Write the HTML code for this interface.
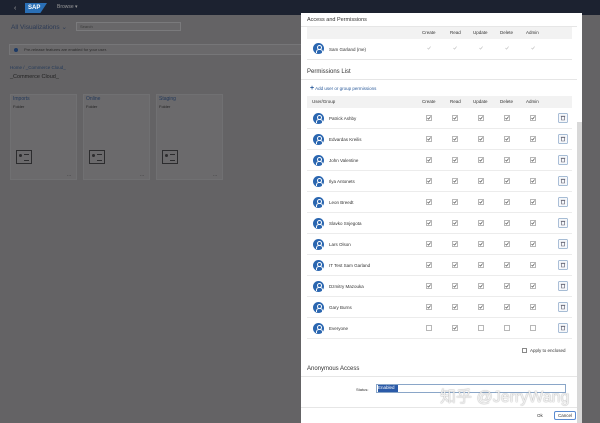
<!DOCTYPE html>
<html><head><meta charset="utf-8"><style>
*{box-sizing:border-box;margin:0;padding:0}
body{width:600px;height:423px;overflow:hidden;background:#646365;font-family:"Liberation Sans",sans-serif;position:relative}
.a{position:absolute}
.bar{left:0;top:0;width:600px;height:15px;background:#1c2230}
.t{font-size:5px;color:#333;white-space:nowrap}
.card{background:#6b6a6c;border:1px solid #707072;width:67px;height:86px}
.dlg{left:301px;top:13px;width:281px;height:410px;background:#fff}
.cb{width:5px;height:5px;border:1px solid #888;font-size:4px;line-height:3px;text-align:center;color:#333}
.av{width:11px;height:11px;border-radius:50%;background:#2a66b0}
.av:before{content:"";position:absolute;left:4px;top:2px;width:3px;height:3px;border-radius:50%;border:1px solid #fff}
.av:after{content:"";position:absolute;left:3px;top:5.5px;width:5px;height:3px;border:1px solid #fff;border-radius:3px 3px 0 0;border-bottom:none}
.line{height:1px;background:#e6e6e6}
.fi{width:16px;height:14px;border:1.5px solid #2c2c2e}
.fi:before{content:"";position:absolute;left:2px;top:3px;width:3px;height:3px;background:#2c2c2e;border-radius:50%}
.fi:after{content:"";position:absolute;left:7px;top:2.5px;width:5px;height:5px;border-top:1px solid #2c2c2e;border-bottom:1px solid #2c2c2e}
</style></head><body>
<div class="a bar"></div>
<div class="a" style="left:14px;top:5px;font-size:7px;color:#aaa">‹</div>
<div class="a" style="left:25px;top:3px;width:22px;height:10px;background:#2a6fb5;clip-path:polygon(0 0,100% 0,70% 100%,0 100%);color:#fff;font-size:6px;font-weight:bold;padding-left:3px;line-height:10px">SAP</div>
<div class="a t" style="left:57px;top:4px;color:#999;font-size:5px">Browse ▾</div>
<div class="a t" style="left:11px;top:23px;color:#2b3a55;font-size:6.5px">All Visualizations ⌄</div>
<div class="a" style="left:76px;top:22px;width:105px;height:9px;border:1px solid #7a7a7c;background:#686769"></div>
<div class="a t" style="left:80px;top:24px;color:#3a3a3a;font-size:4px">Search</div>
<div class="a" style="left:9px;top:44px;width:295px;height:11px;background:#6a696b;border:1px solid #767678"></div>
<div class="a" style="left:14px;top:48px;width:4px;height:4px;border-radius:50%;background:#1d3a66"></div>
<div class="a t" style="left:24px;top:47px;font-size:4px;color:#2a2a2a">Pre-release features are enabled for your user.</div>
<div class="a t" style="left:10px;top:65px;font-size:4.5px;color:#243a5a">Home / _Commerce Cloud_</div>
<div class="a t" style="left:10px;top:74px;font-size:5.5px;color:#222">_Commerce Cloud_</div>
<div class="a card" style="left:10px;top:94px"></div>
<div class="a card" style="left:83px;top:94px"></div>
<div class="a card" style="left:156px;top:94px"></div>
<div class="a t" style="left:13px;top:96px;color:#22385a">Imports</div><div class="a t" style="left:13px;top:104px;font-size:4px;color:#222">Folder</div>
<div class="a t" style="left:86px;top:96px;color:#22385a">Online</div><div class="a t" style="left:86px;top:104px;font-size:4px;color:#222">Folder</div>
<div class="a t" style="left:159px;top:96px;color:#22385a">Staging</div><div class="a t" style="left:159px;top:104px;font-size:4px;color:#222">Folder</div>
<div class="a fi" style="left:16px;top:150px"></div>
<div class="a fi" style="left:89px;top:150px"></div>
<div class="a fi" style="left:162px;top:150px"></div>
<div class="a t" style="left:67px;top:172px;font-size:5px;color:#333">...</div>
<div class="a t" style="left:140px;top:172px;font-size:5px;color:#333">...</div>
<div class="a t" style="left:213px;top:172px;font-size:5px;color:#333">...</div>

<div class="a dlg"></div>
<div class="a" style="left:577px;top:122px;width:5px;height:301px;background:#d8d8d8"></div>
<div class="a t" style="left:307px;top:17px;font-size:5.5px">Access and Permissions</div>
<div class="a line" style="left:301px;top:26px;width:276px"></div>
<div class="a" style="left:307px;top:27px;width:265px;height:12px;background:#f2f2f2"></div>
<div class="a t" style="left:307px;top:30px;font-size:4.5px"><span class="a" style="left:115px">Create</span><span class="a" style="left:143px">Read</span><span class="a" style="left:166px">Update</span><span class="a" style="left:193px">Delete</span><span class="a" style="left:219px">Admin</span></div>
<div class="a av" style="left:313px;top:43px"></div>
<div class="a t" style="left:329px;top:47px;font-size:4.5px">Sam Garland (me)</div>
<div class="a line" style="left:307px;top:59px;width:265px"></div>
<div class="a t" style="left:307px;top:69px;font-size:6px">Permissions List</div>
<div class="a line" style="left:301px;top:79px;width:276px"></div>
<div class="a t" style="left:310px;top:85px;font-size:4.5px;color:#2a5a9a"><b style="font-size:7px">+</b> Add user or group permissions</div>
<div class="a" style="left:307px;top:96px;width:265px;height:12px;background:#f2f2f2"></div>
<div class="a t" style="left:312px;top:99px;font-size:4.5px">User/Group</div>
<div class="a t" style="left:307px;top:99px;font-size:4.5px"><span class="a" style="left:115px">Create</span><span class="a" style="left:143px">Read</span><span class="a" style="left:166px">Update</span><span class="a" style="left:193px">Delete</span><span class="a" style="left:219px">Admin</span></div>

<div class="a" style="left:307px;top:108px">
<div class="a" style="top:0"><div class="a av" style="left:6px;top:5px"></div><div class="a t" style="left:22px;top:8px;font-size:4.5px">Patrick Ashby</div></div>
<div class="a" style="top:21px"><div class="a av" style="left:6px;top:5px"></div><div class="a t" style="left:22px;top:8px;font-size:4.5px">Edvardas Kreilis</div></div>
<div class="a" style="top:42px"><div class="a av" style="left:6px;top:5px"></div><div class="a t" style="left:22px;top:8px;font-size:4.5px">John Valentine</div></div>
<div class="a" style="top:63px"><div class="a av" style="left:6px;top:5px"></div><div class="a t" style="left:22px;top:8px;font-size:4.5px">Ilya Antonets</div></div>
<div class="a" style="top:84px"><div class="a av" style="left:6px;top:5px"></div><div class="a t" style="left:22px;top:8px;font-size:4.5px">Leon Breedt</div></div>
<div class="a" style="top:105px"><div class="a av" style="left:6px;top:5px"></div><div class="a t" style="left:22px;top:8px;font-size:4.5px">Slavko Snjegota</div></div>
<div class="a" style="top:126px"><div class="a av" style="left:6px;top:5px"></div><div class="a t" style="left:22px;top:8px;font-size:4.5px">Lars Olson</div></div>
<div class="a" style="top:147px"><div class="a av" style="left:6px;top:5px"></div><div class="a t" style="left:22px;top:8px;font-size:4.5px">IT Test Sam Garland</div></div>
<div class="a" style="top:168px"><div class="a av" style="left:6px;top:5px"></div><div class="a t" style="left:22px;top:8px;font-size:4.5px">Dzmitry Mazouka</div></div>
<div class="a" style="top:189px"><div class="a av" style="left:6px;top:5px"></div><div class="a t" style="left:22px;top:8px;font-size:4.5px">Gary Burns</div></div>
<div class="a" style="top:210px"><div class="a av" style="left:6px;top:5px"></div><div class="a t" style="left:22px;top:8px;font-size:4.5px">Everyone</div></div>
</div>
<svg class="a" style="left:301px;top:40px" width="281" height="302">
<defs>
<g id="c"><rect x="-2.5" y="-2.5" width="5" height="5" fill="#fff" stroke="#888" stroke-width=".6"/><path d="M-1.5 0 L-.4 1.2 L1.6 -1.4" fill="none" stroke="#333" stroke-width=".6"/></g>
<g id="g"><path d="M-1.5 0 L-.4 1.2 L1.6 -1.4" fill="none" stroke="#bbb" stroke-width=".6"/></g>
<g id="e"><rect x="-2.5" y="-2.5" width="5" height="5" fill="#fff" stroke="#888" stroke-width=".6"/></g>
<g id="t"><rect x="-4.5" y="-4.5" width="9" height="9" rx="1" fill="#f6f8fb" stroke="#8aa6c8" stroke-width=".7"/><path d="M-1.5 -1.5 h3 v3.5 h-3 z M-2.2 -1.8 h4.4" fill="none" stroke="#556" stroke-width=".6"/></g>
<g id="r"><use href="#c" x="128"/><use href="#c" x="154"/><use href="#c" x="180"/><use href="#c" x="206"/><use href="#c" x="232"/><use href="#t" x="262"/></g>
</defs>
<use href="#g" x="128" y="8"/><use href="#g" x="154" y="8"/><use href="#g" x="180" y="8"/><use href="#g" x="206" y="8"/><use href="#g" x="232" y="8"/>
<g transform="translate(0,68)">
<g stroke="#ececec"><line x1="6" x2="271" y1="20.5" y2="20.5"/><line x1="6" x2="271" y1="41.5" y2="41.5"/><line x1="6" x2="271" y1="62.5" y2="62.5"/><line x1="6" x2="271" y1="83.5" y2="83.5"/><line x1="6" x2="271" y1="104.5" y2="104.5"/><line x1="6" x2="271" y1="125.5" y2="125.5"/><line x1="6" x2="271" y1="146.5" y2="146.5"/><line x1="6" x2="271" y1="167.5" y2="167.5"/><line x1="6" x2="271" y1="188.5" y2="188.5"/><line x1="6" x2="271" y1="209.5" y2="209.5"/><line x1="6" x2="271" y1="230.5" y2="230.5"/></g>
<use href="#r" y="10"/><use href="#r" y="31"/><use href="#r" y="52"/><use href="#r" y="73"/><use href="#r" y="94"/><use href="#r" y="115"/><use href="#r" y="136"/><use href="#r" y="157"/><use href="#r" y="178"/><use href="#r" y="199"/>
<use href="#e" x="128" y="220"/><use href="#c" x="154" y="220"/><use href="#e" x="180" y="220"/><use href="#e" x="206" y="220"/><use href="#e" x="232" y="220"/><use href="#t" x="262" y="220"/>
</g>
</svg>
<div class="a cb" style="left:522px;top:348px"></div>
<div class="a t" style="left:530px;top:348px;font-size:4.5px">Apply to enclosed</div>
<div class="a t" style="left:307px;top:366px;font-size:6px">Anonymous Access</div>
<div class="a line" style="left:301px;top:376px;width:276px"></div>
<div class="a t" style="left:356px;top:387px;font-size:4px">Status:</div>
<div class="a" style="left:376px;top:384px;width:190px;height:9px;border:1px solid #8aa6c8"></div>
<div class="a t" style="left:378px;top:385px;width:20px;height:7px;background:#2a5aa8;color:#fff;font-size:4.5px">Enabled</div>
<div class="a line" style="left:301px;top:407px;width:276px"></div>
<div class="a t" style="left:537px;top:413px;font-size:4.5px">Ok</div>
<div class="a" style="left:554px;top:411px;width:22px;height:9px;border:1px solid #5a8ad0;border-radius:2px"></div>
<div class="a t" style="left:558px;top:413px;font-size:4.5px">Cancel</div>
<div class="a t" style="left:440px;top:383px;font-size:16px;color:rgba(255,255,255,.85);font-family:'Liberation Sans','Noto Sans CJK SC',sans-serif;text-shadow:0 0 1px #777">知乎 @JerryWang</div>
</body></html>
